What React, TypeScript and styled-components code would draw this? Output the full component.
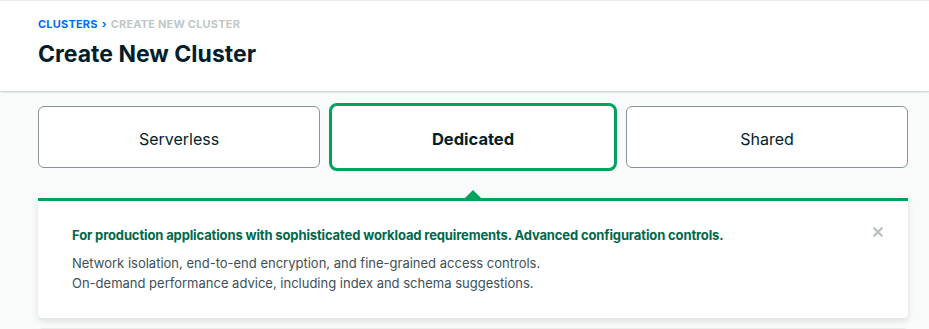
import React, { useState } from "react";
import styled, { createGlobalStyle } from "styled-components";

const GlobalStyle = createGlobalStyle`
  html, body {
    margin: 0;
    padding: 0;
    background: #f9fbfa;
    font-family: "Inter", "Liberation Sans", sans-serif;
    -webkit-font-smoothing: antialiased;
  }
  * { box-sizing: border-box; }
`;

const Page = styled.div`
  min-height: 329px;
  background: #f9fbfa;
`;

const Header = styled.header`
  background: #ffffff;
  border-top: 1px solid #e8edeb;
  height: 91px;
  padding: 16px 38px 0 38px;
  box-shadow: 0 1px 2px rgba(6, 22, 33, 0.22);
  position: relative;
  z-index: 1;
`;

const Breadcrumb = styled.nav`
  display: flex;
  align-items: center;
  gap: 4px;
  font-size: 11px;
  font-weight: 700;
  letter-spacing: 0.2px;
  line-height: 14px;
  text-transform: uppercase;
`;

const CrumbLink = styled.a`
  color: #016bf8;
  text-decoration: none;
`;

const CrumbSep = styled.span`
  color: #016bf8;
`;

const CrumbCurrent = styled.span`
  color: #c1c7c6;
`;

const Title = styled.h1`
  margin: 8px 0 0 0;
  font-size: 23px;
  line-height: 30px;
  font-weight: 700;
  color: #001e2b;
`;

const Main = styled.main`
  padding: 15px 21px 0 38px;
`;

const Tabs = styled.div`
  display: grid;
  grid-template-columns: repeat(3, 1fr);
  gap: 12px;
`;

const Tab = styled.button<{ $active: boolean }>`
  height: ${(p) => (p.$active ? 68 : 62)}px;
  margin: ${(p) => (p.$active ? "-3px" : "0")};
  background: #ffffff;
  border: ${(p) => (p.$active ? "3px solid #00a35c" : "1px solid #889397")};
  border-radius: ${(p) => (p.$active ? 8 : 6)}px;
  font-family: inherit;
  font-size: ${(p) => (p.$active ? 16.5 : 16)}px;
  font-weight: ${(p) => (p.$active ? 700 : 400)};
  color: #001e2b;
  cursor: pointer;
  padding: 4px 0 0 0;
`;

const Panel = styled.section`
  position: relative;
  margin-top: 30px;
  background: #ffffff;
  border-top: 3px solid #00a35c;
  border-radius: 0 0 4px 4px;
  box-shadow: 0 3px 6px rgba(6, 22, 33, 0.12);
  padding: 24px 34px 25px 34px;
`;

const Pointer = styled.span`
  position: absolute;
  top: -11px;
  left: 50%;
  transform: translateX(-50%);
  width: 0;
  height: 0;
  border-left: 8px solid transparent;
  border-right: 8px solid transparent;
  border-bottom: 8px solid #00a35c;
`;

const PanelHeading = styled.h2`
  margin: 0;
  font-size: 13px;
  line-height: 20px;
  font-weight: 700;
  letter-spacing: -0.13px;
  color: #00684a;
`;

const PanelBody = styled.div`
  margin-top: 8px;
  font-size: 13px;
  line-height: 20px;
  color: #3d4f58;
`;

const Line = styled.p`
  margin: 0;
`;

const CloseButton = styled.button`
  position: absolute;
  top: 25px;
  right: 24px;
  width: 12px;
  height: 12px;
  padding: 0;
  border: none;
  background: transparent;
  cursor: pointer;
  display: flex;
  align-items: center;
  justify-content: center;
`;

const NextCard = styled.div`
  margin-top: 10px;
  height: 40px;
  background: #ffffff;
  border: 1px solid #e8edeb;
  border-radius: 4px;
`;

const tabs = ["Serverless", "Dedicated", "Shared"];

export default function App() {
  const [active, setActive] = useState(1);
  return (
    <Page>
      <GlobalStyle />
      <Header>
        <Breadcrumb>
          <CrumbLink href="#">Clusters</CrumbLink>
          <CrumbSep>›</CrumbSep>
          <CrumbCurrent>Create New Cluster</CrumbCurrent>
        </Breadcrumb>
        <Title>Create New Cluster</Title>
      </Header>
      <Main>
        <Tabs>
          {tabs.map((t, i) => (
            <Tab key={t} $active={i === active} onClick={() => setActive(i)}>
              {t}
            </Tab>
          ))}
        </Tabs>
        <Panel>
          <Pointer />
          <CloseButton aria-label="Close">
            <svg width="10" height="10" viewBox="0 0 10 10">
              <path d="M1.5 1.5 L8.5 8.5 M8.5 1.5 L1.5 8.5" stroke="#b8c4c2" strokeWidth="2.4" strokeLinecap="square" />
            </svg>
          </CloseButton>
          <PanelHeading>
            For production applications with sophisticated workload requirements. Advanced configuration controls.
          </PanelHeading>
          <PanelBody>
            <Line>Network isolation, end-to-end encryption, and fine-grained access controls.</Line>
            <Line>On-demand performance advice, including index and schema suggestions.</Line>
          </PanelBody>
        </Panel>
        <NextCard />
      </Main>
    </Page>
  );
}
